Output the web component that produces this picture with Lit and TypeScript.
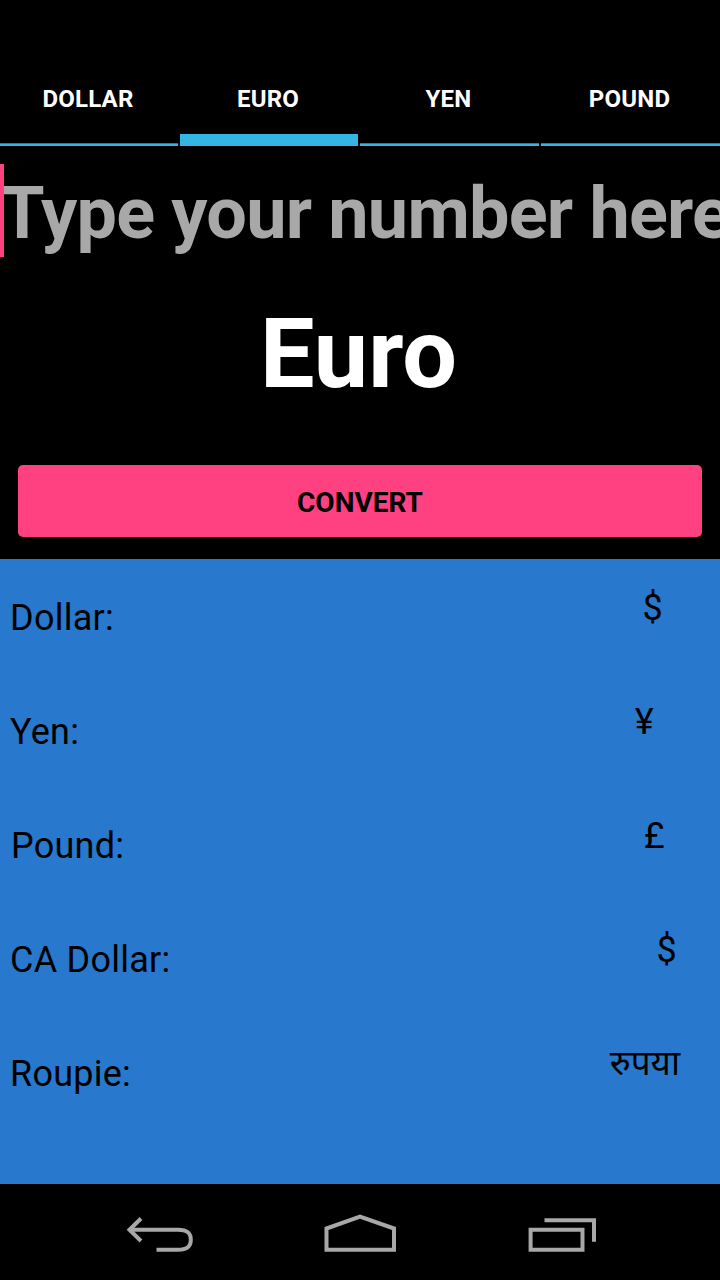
import { LitElement, html, css } from "lit";
import { customElement } from "lit/decorators.js";

const TABS = ["DOLLAR", "EURO", "YEN", "POUND"];
const ROWS = [
  { label: "Dollar:", sym: "$", cls: "r1" },
  { label: "Yen:", sym: "¥", cls: "r2" },
  { label: "Pound:", sym: "£", cls: "r3" },
  { label: "CA Dollar:", sym: "$", cls: "r4" },
  { label: "Roupie:", sym: "रुपया", cls: "r5" },
];

@customElement("app-root")
export class AppRoot extends LitElement {
  static styles = css`
    :host {
      display: block;
      width: 720px;
      height: 1280px;
      background: #000;
      font-family: Roboto, "Noto Sans", sans-serif;
      overflow: hidden;
    }
    .screen { display: flex; flex-direction: column; height: 1280px; }
    .tabs {
      margin-top: 72px;
      height: 74px;
      display: grid;
      grid-template-columns: 178px 178px 179px 179px;
      column-gap: 2px;
    }
    .tab {
      box-sizing: border-box;
      border-bottom: 2px solid #33b5e5;
      box-shadow: inset 0 -1px 0 #1f7d9f;
      color: #fff;
      font-weight: 700;
      font-size: 24px;
      letter-spacing: 0.2px;
      line-height: 54px;
      text-align: center;
      padding-right: 2px;
    }
    .tab.active { border-bottom-width: 12px; box-shadow: none; }
    .input {
      margin-top: 18px;
      height: 93px;
      display: flex;
      overflow: hidden;
      white-space: nowrap;
      font-size: 72px;
      font-weight: 700;
      letter-spacing: -0.8px;
      line-height: 99px;
      color: #a8a8a8;
    }
    .cursor { flex: none; width: 4px; height: 93px; background: #ff4081; margin-right: -4px; position: relative; z-index: 1; }
    .title {
      margin-top: 44px;
      height: 164px;
      box-sizing: border-box;
      padding-right: 3px;
      text-align: center;
      color: #fff;
      font-size: 97px;
      font-weight: 700;
      line-height: 106px;
    }
    .btn {
      margin: 0 18px;
      height: 72px;
      border-radius: 5px;
      background: #ff4081;
      color: #000;
      font-size: 28px;
      font-weight: 700;
      line-height: 76px;
      text-align: center;
    }
    .panel {
      margin-top: 22px;
      height: 625px;
      background: #2878cd;
      color: #000;
      box-sizing: border-box;
      padding-top: 2px;
    }
    .row {
      height: 114px;
      display: flex;
      justify-content: space-between;
      box-sizing: border-box;
      font-size: 36px;
      letter-spacing: 0.25px;
    }
    .label { padding-left: 10px; line-height: 114px; }
    .sym { line-height: 94px; font-size: 36px; }
    .r1 .sym { padding-right: 57px; }
    .r2 .sym { padding-right: 66px; }
    .r3 .label { padding-left: 11px; }
    .r3 .sym { padding-right: 55px; }
    .r4 .sym { padding-right: 43px; }
    .r5 .sym {
      padding-right: 40px;
      font-family: "Noto Sans", Roboto, "Noto Sans Devanagari", sans-serif;
      font-size: 35px;
      letter-spacing: 0;
      line-height: 90px;
    }
    .nav {
      flex: 1;
      display: flex;
      justify-content: center;
      align-items: flex-start;
    }
    svg { display: block; }
  `;

  render() {
    return html`
      <div class="screen">
        <div class="tabs">
          ${TABS.map((t, i) => html`<div class="tab ${i === 1 ? "active" : ""}">${t}</div>`)}
        </div>
        <div class="input"><span class="cursor"></span><span>Type your number here</span></div>
        <div class="title">Euro</div>
        <div class="btn">CONVERT</div>
        <div class="panel">
          ${ROWS.map(
            (r) => html`<div class="row ${r.cls}"><span class="label">${r.label}</span><span class="sym">${r.sym}</span></div>`
          )}
        </div>
        <div class="nav">
          <svg width="720" height="96" viewBox="0 0 720 96" fill="none" stroke="#a8a8a8" stroke-width="4">
            <path d="M141 34.500 L129.500 45.700 L141 57" />
            <path d="M129.500 45.700 H178 C186 45.700 190.800 48 190.800 55.700 C190.800 63.400 186 65.700 178 65.700 H156.500" />
            <path d="M326.500 65.700 V44.500 L360 32.700 L394 44.500 V65.700 Z" />
            <path d="M530.600 45.700 H582.500 V65.700 H530.600 Z" />
            <path d="M544.500 36.300 H594 V57.700" />
          </svg>
        </div>
      </div>
    `;
  }
}
